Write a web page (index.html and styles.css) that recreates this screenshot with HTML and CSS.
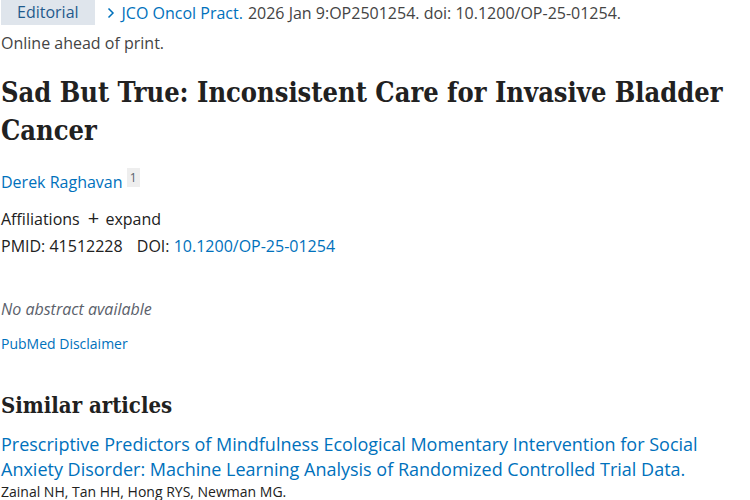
FILE: index.html
```html
<!DOCTYPE html>
<html>
<head>
<meta charset="utf-8">
<link rel="stylesheet" href="styles.css">
</head>
<body>
<main class="article">
  <div class="cit-line">
    <span class="pub-type">Editorial</span>
    <svg class="chev" width="8" height="12" viewBox="0 0 8 12"><path d="M1.5 1.5 L6 6 L1.5 10.5" fill="none" stroke="#0071bc" stroke-width="1.5"/></svg>
    <span class="journal">JCO Oncol Pract.</span>
    <span class="cit">2026 Jan 9:OP2501254. doi: 10.1200/OP-25-01254.</span>
  </div>
  <div class="status">Online ahead of print.</div>
  <h1 class="title">Sad But True: Inconsistent Care for Invasive Bladder Cancer</h1>
  <div class="authors"><a class="link">Derek Raghavan</a> <sup class="aff-num">1</sup></div>
  <div class="affil">Affiliations <span class="plus">+</span> expand</div>
  <div class="ids">PMID: 41512228 <span class="doi-label">DOI:</span> <a class="link">10.1200/OP-25-01254</a></div>
  <div class="abstract">No abstract available</div>
  <div class="disclaimer"><a class="link">PubMed Disclaimer</a></div>
  <h2 class="similar">Similar articles</h2>
  <div class="sim-item">
    <a class="link sim-title">Prescriptive Predictors of Mindfulness Ecological Momentary Intervention for Social Anxiety Disorder: Machine Learning Analysis of Randomized Controlled Trial Data.</a>
    <div class="sim-authors">Zainal NH, Tan HH, Hong RYS, Newman MG.</div>
  </div>
</main>
</body>
</html>
```
FILE: styles.css
```css
html, body { margin: 0; padding: 0; background: #fff; }
body { font-family: "Open Sans", "Noto Sans", sans-serif; color: #212121; font-size: 16px; }
.article { padding: 0 0 0 1px; width: 745px; }
.link { color: #0071bc; text-decoration: none; }
.cit-line { display: flex; align-items: center; height: 25px; white-space: nowrap; }
.pub-type { background: #dfe5ec; color: #1f5a8c; height: 25px; line-height: 25px; padding: 0 16px 0 16px; margin-right: 12px; }
.chev { margin-right: 7px; }
.journal { color: #0071bc; margin-right: 5px; }
.cit { color: #444; }
.status { color: #444; margin-top: 6px; line-height: 24px; }
.title { font-family: "DejaVu Serif Condensed", "DejaVu Serif", serif; font-stretch: condensed; font-weight: bold; font-size: 27px; line-height: 38px; margin: 19px 0 0; color: #212121; }
.authors { margin-top: 20px; line-height: 24px; }
.aff-num { font-size: 12px; line-height: 14px; background: #eeeeee; color: #5b616b; padding: 1px 3px; vertical-align: 6px; }
.affil { margin-top: 12px; line-height: 24px; }
.plus { font-size: 20px; margin: 0 2px 0 4px; }
.ids { line-height: 24px; margin-top: 3px; }
.doi-label { margin-left: 10px; }
.abstract { margin-top: 39px; font-style: italic; color: #5b616b; line-height: 24px; }
.disclaimer { margin-top: 11px; font-size: 14px; line-height: 24px; }
.similar { font-family: "DejaVu Serif Condensed", "DejaVu Serif", serif; font-stretch: condensed; font-weight: bold; font-size: 22px; line-height: 30px; margin: 34px 0 0; }
.sim-item { margin-top: 12px; }
.sim-title { font-size: 18px; line-height: 25px; display: block; }
.sim-authors { font-size: 14px; line-height: 18px; margin-top: 1px; }
```
